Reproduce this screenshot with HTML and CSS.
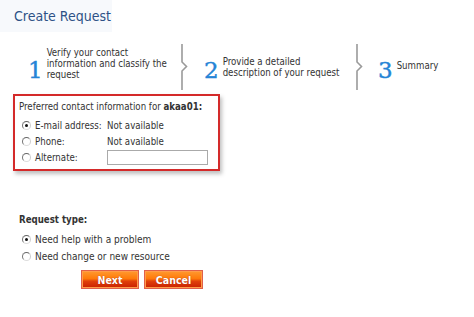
FILE: index.html
```html
<!DOCTYPE html>
<html lang="en">
<head>
  <meta charset="UTF-8">
  <meta name="viewport" content="width=device-width, initial-scale=1.0">
  <title>Create Request</title>
  <link rel="stylesheet" href="styles.css">
</head>
<body>
  <div class="title-bar">
    <h1>Create Request</h1>
  </div>

  <div class="steps">
    <div class="step step-one">
      <span class="num">1</span>
      <span class="label">Verify your contact<br>information and classify the<br>request</span>
    </div>
    <svg class="divider" width="8" height="46" viewBox="0 0 8 46">
      <path d="M2 0 V18 L6.5 22.5 L2 27 V46" fill="none" stroke="#9a9a9a" stroke-width="1.6"/>
    </svg>
    <div class="step step-two">
      <span class="num">2</span>
      <span class="label">Provide a detailed<br>description of your request</span>
    </div>
    <svg class="divider" width="8" height="46" viewBox="0 0 8 46">
      <path d="M2 0 V18 L6.5 22.5 L2 27 V46" fill="none" stroke="#9a9a9a" stroke-width="1.6"/>
    </svg>
    <div class="step step-three">
      <span class="num">3</span>
      <span class="label">Summary</span>
    </div>
  </div>

  <div class="contact-box">
    <div class="contact-title">Preferred contact information for <b>akaa01:</b></div>
    <div class="contact-row">
      <span class="radio checked"></span>
      <span class="contact-label">E-mail address:</span>
      <span class="contact-value">Not available</span>
    </div>
    <div class="contact-row">
      <span class="radio"></span>
      <span class="contact-label">Phone:</span>
      <span class="contact-value">Not available</span>
    </div>
    <div class="contact-row">
      <span class="radio"></span>
      <span class="contact-label">Alternate:</span>
      <input class="alt-input" type="text">
    </div>
  </div>

  <div class="request-type">
    <div class="type-title">Request type:</div>
    <div class="type-row"><span class="radio checked"></span>Need help with a problem</div>
    <div class="type-row"><span class="radio"></span>Need change or new resource</div>
  </div>

  <div class="actions">
    <button class="btn">Next</button>
    <button class="btn">Cancel</button>
  </div>
</body>
</html>
```

FILE: styles.css
```css
body {
  margin: 0;
  background: #fff;
  color: #333;
  font-family: "DejaVu Sans Condensed", "DejaVu Sans", sans-serif;
  font-size: 9.6px;
}

.title-bar {
  width: 112px;
  height: 32px;
  background: #f7f9fc;
}

h1 {
  margin: 0;
  padding: 8px 0 0 14px;
  font-size: 14px;
  font-weight: normal;
  white-space: nowrap;
  color: #2d5186;
}

.steps {
  display: flex;
  align-items: center;
  height: 46px;
  margin-top: 12px;
  padding-left: 28px;
}

.step {
  display: flex;
  align-items: center;
}

.step .num {
  font-family: "DejaVu Serif", serif;
  font-size: 23px;
  color: #2584d6;
  -webkit-text-stroke: 0.4px #2584d6;
  padding-top: 6px;
  margin-right: 4px;
}

.step .label {
  line-height: 11px;
}

.step-one { width: 152px; }
.step-one .label { margin-bottom: 8px; }

.step-two { width: 151px; margin-left: 16px; }

.step-three { margin-left: 15px; }
.step-three .label { margin-bottom: 4px; }

.contact-box {
  width: 199px;
  margin: 4px 0 0 13px;
  padding: 5px 0 4px 4px;
  border: 2px solid #d42a2a;
  box-shadow: 2px 3px 4px rgba(0, 0, 0, 0.25);
}

.contact-title {
  line-height: 12px;
  margin-bottom: 4px;
}

.contact-row {
  display: flex;
  align-items: center;
  height: 16px;
}

.contact-label {
  width: 72px;
}

.alt-input {
  width: 99px;
  height: 13px;
  padding: 0;
  margin: 0;
  border: 1px solid #aaa;
}

.radio {
  display: inline-block;
  position: relative;
  width: 7px;
  height: 7px;
  margin: 0 4px 0 3px;
  border: 1px solid;
  border-color: #666 #ccc #ddd #777;
  border-radius: 50%;
  background: #fff;
}

.radio.checked::after {
  content: "";
  position: absolute;
  left: 2px;
  top: 2px;
  width: 3px;
  height: 3px;
  border-radius: 50%;
  background: #111;
}

.request-type {
  margin: 43px 0 0 19px;
}

.type-title {
  font-weight: bold;
  line-height: 12px;
  margin-bottom: 5px;
}

.type-row {
  display: flex;
  align-items: center;
  height: 17px;
  font-size: 10px;
}

.actions {
  display: flex;
  gap: 5px;
  margin: 5px 0 0 81px;
}

.btn {
  width: 58px;
  height: 19px;
  padding: 0;
  border: 1px solid #e0604a;
  box-shadow: inset 0 0 0 1px #ff9d4a;
  background: linear-gradient(#ff9a30 0%, #ff7a0a 45%, #e0400a 60%, #c82000 100%);
  color: #fff;
  font-family: "DejaVu Sans Condensed", "DejaVu Sans", sans-serif;
  font-size: 10.5px;
  font-weight: bold;
  text-shadow: 0 0 1px #a02000;
  cursor: pointer;
}

.btn + .btn {
  width: 59px;
}
```
